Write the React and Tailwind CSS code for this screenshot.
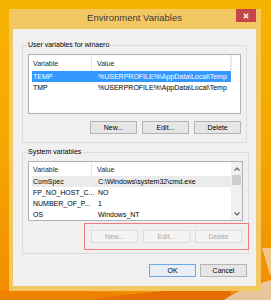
import React from "react";

const font = { fontFamily: '"Liberation Sans", Arial, sans-serif' };

function Btn({ children, disabled, primary }) {
  const base = "h-[13px] w-[47px] flex items-center justify-center text-[7px] leading-[10px] border";
  if (disabled)
    return <div className={`${base} border-[#dcdcdc] bg-[#f4f4f4] text-[#a8a8a8]`}>{children}</div>;
  if (primary)
    return <div className={`${base} border-[#6fa8e6] bg-[#e8eef4] text-black`}>{children}</div>;
  return <div className={`${base} border-[#b4b4b4] bg-[#e6e6e6] text-black`}>{children}</div>;
}

function Row({ v, val, state }) {
  const cls =
    state === "sel"
      ? "bg-[#3399ff] text-white"
      : state === "hover"
      ? "bg-[#ebebeb] text-black"
      : "text-black";
  return (
    <div className="flex h-[11px] items-center pl-[3px]">
      <div className={`flex h-[11px] flex-1 items-center leading-[11px] ${cls}`}>
        <div className="w-[62px] overflow-hidden whitespace-nowrap pl-[1px] leading-[11px]">{v}</div>
        <div className="flex-1 overflow-hidden whitespace-nowrap pl-[4px] leading-[11px]">{val}</div>
      </div>
    </div>
  );
}

function ListView({ rows, scroll }) {
  return (
    <div className="flex h-[60px] border border-[#a9b3bd] bg-white text-[7px] leading-[11px]">
      <div className="flex w-[202px] flex-col">
        <div className="flex h-[16px] items-center">
          <div className="flex h-full w-[63px] items-center border-r border-[#e5e5e5] pl-[4px] text-[#2b2b2b]">Variable</div>
          <div className="flex h-full flex-1 items-center pl-[5px] text-[#2b2b2b]">Value</div>
          {!scroll && <div className="h-full w-0 border-r border-[#e5e5e5]" />}
        </div>
        {rows.map((r, i) => (
          <Row key={i} {...r} />
        ))}
      </div>
      {scroll ? (
        <div className="ml-auto flex w-[11px] flex-col items-center bg-[#f0f0f0]">
          <div className="flex h-[13px] w-full items-center justify-center">
            <svg width="6" height="4" viewBox="0 0 6 4"><path d="M0.5 3.5 L3 1 L5.5 3.5" fill="none" stroke="#606060" strokeWidth="1.2" /></svg>
          </div>
          <div className="h-[10px] w-[9px] bg-[#cdcdcd]" />
          <div className="flex-1" />
          <div className="flex h-[12px] w-full items-center justify-center">
            <svg width="6" height="4" viewBox="0 0 6 4"><path d="M0.5 0.5 L3 3 L5.5 0.5" fill="none" stroke="#606060" strokeWidth="1.2" /></svg>
          </div>
        </div>
      ) : (
        <div className="flex flex-1 flex-col"><div className="h-[16px] border-l border-[#f0f0f0]" /></div>
      )}
    </div>
  );
}

export default function App() {
  const path = "%USERPROFILE%\\AppData\\Local\\Temp";
  return (
    <div className="relative h-[300px] w-[271px] overflow-hidden bg-gradient-to-b from-[#f6b400] via-[#f5a600] to-[#f08c00]" style={font}>
      <svg className="absolute inset-0" width="271" height="300" viewBox="0 0 271 300">
        <path d="M0 290 C60 288 120 292 180 300 L0 300 Z" fill="#ef8200" />
        <path d="M90 300 C140 292 190 288 230 290 L232 300 Z" fill="#e66e00" />
        <path d="M224 300 C235 292 250 286 271 280 L271 300 Z" fill="#e8c59a" />
        <path d="M262 248 C266 260 268 270 271 276 L271 248 Z" fill="#f0c88a" />
      </svg>
      <div className="relative pl-[9px] pt-[9px]">
        <div className="flex h-[282px] w-[252px] flex-col bg-[#f3c862] px-[4px] pb-[5px] pr-[5px]">
          <div className="relative flex h-[20px] items-start justify-center">
            <div className="pt-[3px] text-[9.5px] leading-[11px] text-[#3a3a3a]">Environment Variables</div>
            <div className="absolute right-[0px] top-0 flex h-[13px] w-[20px] items-center justify-center bg-[#c7454a]">
              <svg width="6" height="6" viewBox="0 0 6 6"><path d="M0.8 0.8 L5.2 5.2 M5.2 0.8 L0.8 5.2" stroke="white" strokeWidth="1.4" /></svg>
            </div>
          </div>
          <div className="flex flex-1 flex-col bg-[#f0f0f0] px-[9px] pt-[11px]">
            <fieldset className="border border-[#dcdcdc] px-[5px] pb-[8px] pt-[4px]">
              <legend className="ml-[-1px] px-[1px] text-[7px] leading-[10px] text-black">User variables for winaero</legend>
              <ListView
                rows={[
                  { v: "TEMP", val: path, state: "sel" },
                  { v: "TMP", val: path },
                ]}
              />
              <div className="mt-[7px] flex justify-end gap-[5px]">
                <Btn>New...</Btn>
                <Btn>Edit...</Btn>
                <Btn>Delete</Btn>
              </div>
            </fieldset>
            <fieldset className="mt-[4px] border border-[#dcdcdc] px-[5px] pb-[3px] pt-[4px]">
              <legend className="ml-[-1px] px-[1px] text-[7px] leading-[10px] text-black">System variables</legend>
              <ListView
                scroll
                rows={[
                  { v: "ComSpec", val: "C:\\Windows\\system32\\cmd.exe", state: "hover" },
                  { v: "FP_NO_HOST_C...", val: "NO" },
                  { v: "NUMBER_OF_P...", val: "1" },
                  { v: "OS", val: "Windows_NT" },
                ]}
              />
              <div className="ml-[56px] mr-[-6px] mt-[2px] flex justify-end gap-[5px] border border-[#f27a7a] px-[6px] py-[6px]">
                <Btn disabled>New...</Btn>
                <Btn disabled>Edit...</Btn>
                <Btn disabled>Delete</Btn>
              </div>
            </fieldset>
            <div className="mt-[10px] flex justify-end gap-[4px]">
              <Btn primary>OK</Btn>
              <Btn>Cancel</Btn>
            </div>
          </div>
        </div>
      </div>
    </div>
  );
}
